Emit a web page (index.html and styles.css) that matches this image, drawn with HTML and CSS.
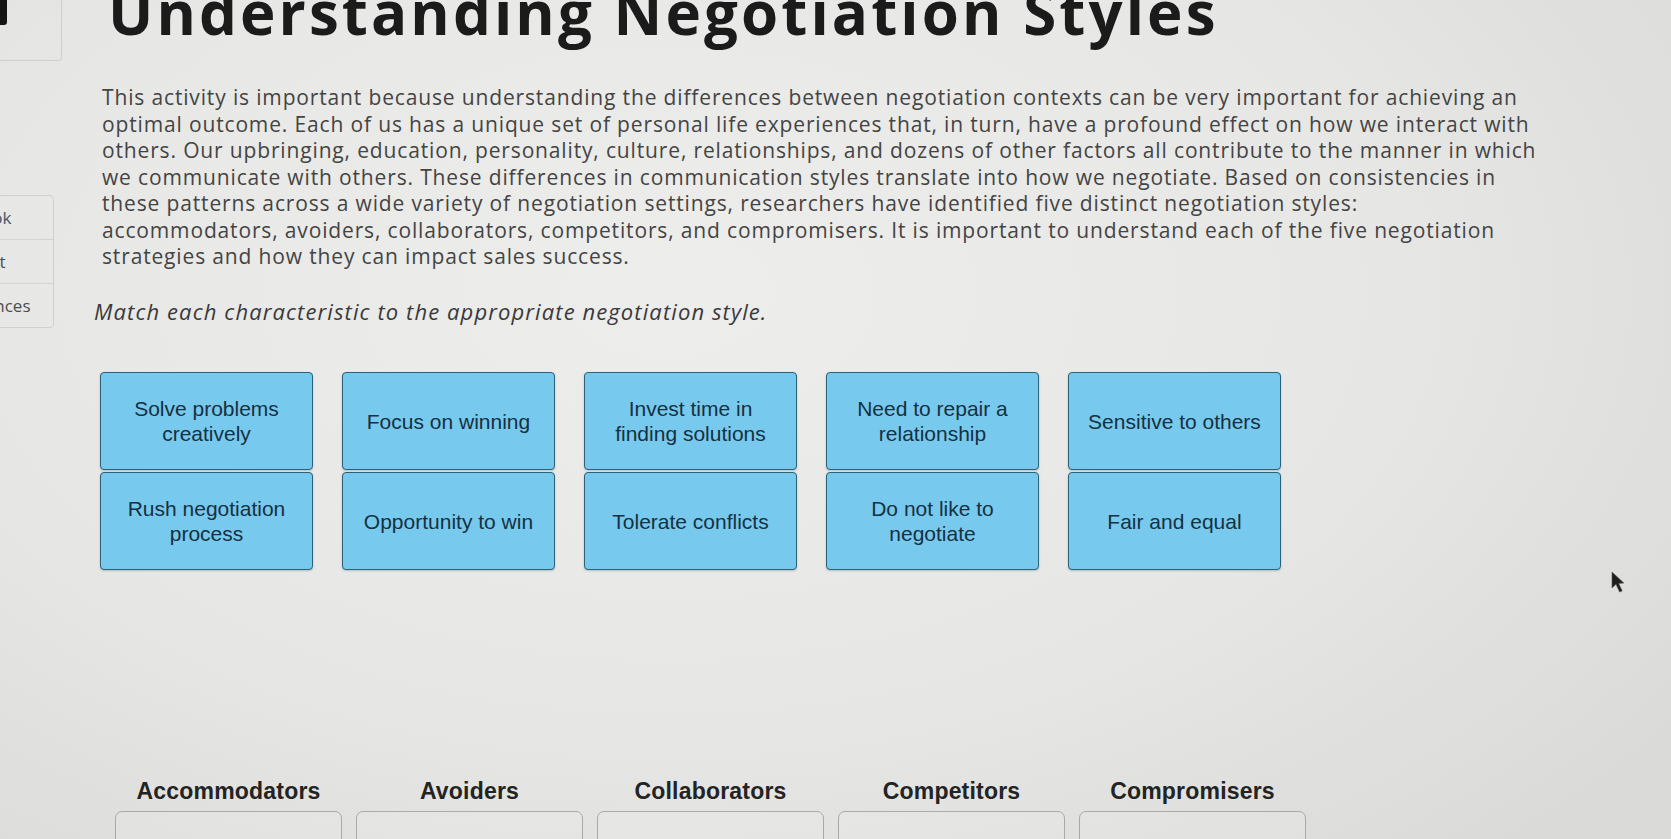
FILE: index.html
```html
<!DOCTYPE html>
<html lang="en">
<head>
<meta charset="utf-8">
<title>Understanding Negotiation Styles</title>
<link rel="stylesheet" href="styles.css">
</head>
<body>
<div class="screen">
  <aside class="sidebar">
    <div class="side-top"><span class="side-mark"></span></div>
    <nav class="side-nav">
      <a class="side-link side-link--active">eBook</a>
      <a class="side-link">Print</a>
      <a class="side-link">References</a>
    </nav>
  </aside>

  <main class="activity">
    <h1 class="activity-title">Understanding Negotiation Styles</h1>
    <p class="intro">This activity is important because understanding the differences between negotiation contexts can be very important for achieving an<br>optimal outcome. Each of us has a unique set of personal life experiences that, in turn, have a profound effect on how we interact with<br>others. Our upbringing, education, personality, culture, relationships, and dozens of other factors all contribute to the manner in which<br>we communicate with others. These differences in communication styles translate into how we negotiate. Based on consistencies in<br>these patterns across a wide variety of negotiation settings, researchers have identified five distinct negotiation styles:<br>accommodators, avoiders, collaborators, competitors, and compromisers. It is important to understand each of the five negotiation<br>strategies and how they can impact sales success.</p>
    <p class="prompt">Match each characteristic to the appropriate negotiation style.</p>

    <div class="cards">
      <div class="card">Solve problems creatively</div>
      <div class="card">Focus on winning</div>
      <div class="card">Invest time in finding solutions</div>
      <div class="card">Need to repair a relationship</div>
      <div class="card">Sensitive to others</div>
      <div class="card">Rush negotiation process</div>
      <div class="card">Opportunity to win</div>
      <div class="card">Tolerate conflicts</div>
      <div class="card">Do not like to negotiate</div>
      <div class="card">Fair and equal</div>
    </div>

    <div class="targets">
      <div class="target"><h2 class="target-label">Accommodators</h2><div class="drop-zone"></div></div>
      <div class="target"><h2 class="target-label">Avoiders</h2><div class="drop-zone"></div></div>
      <div class="target"><h2 class="target-label">Collaborators</h2><div class="drop-zone"></div></div>
      <div class="target"><h2 class="target-label">Competitors</h2><div class="drop-zone"></div></div>
      <div class="target"><h2 class="target-label">Compromisers</h2><div class="drop-zone"></div></div>
    </div>
  </main>

  <svg class="pointer" width="18" height="24" viewBox="0 0 18 24" aria-hidden="true">
    <path d="M1 1 L1 17 L5 13.3 L8.6 21 L11.2 19.9 L7.7 12.4 L12.8 12 Z" fill="#1e1e1e" stroke="#555" stroke-width="0.6"/>
  </svg>
</div>
</body>
</html>
```

FILE: styles.css
```css
html, body {
  margin: 0;
  padding: 0;
}

body {
  width: 1671px;
  height: 839px;
  overflow: hidden;
  font-family: "Open Sans", "Liberation Sans", sans-serif;
  background: radial-gradient(ellipse 75% 90% at 40% 35%, #ededeb 0%, #e7e7e5 55%, #dadad8 100%);
  color: #3d3d3d;
}

.screen {
  position: relative;
  display: flex;
  align-items: flex-start;
  height: 839px;
}

/* left navigation rail, partly scrolled out of view */
.sidebar {
  flex: none;
  width: 140px;
  margin-left: -78px;
  display: flex;
  flex-direction: column;
}

.side-top {
  position: relative;
  height: 60px;
  border-right: 1px solid #cfcfcd;
  border-bottom: 1px solid #cfcfcd;
  border-radius: 0 0 4px 0;
}

.side-mark {
  position: absolute;
  left: 76px;
  top: 0;
  width: 9px;
  height: 25px;
  background: #151515;
  border-radius: 0 0 3px 0;
}

.side-nav {
  margin: 134px 0 0 -3px;
  width: 133px;
  display: flex;
  flex-direction: column;
  border: 1px solid #d0d0ce;
  border-radius: 4px;
}

.side-link {
  height: 43px;
  display: flex;
  align-items: center;
  justify-content: center;
  font-size: 17px;
  color: #4d4d4d;
  border-top: 1px solid #d4d4d2;
}

.side-link--active {
  color: #4a5568;
}

.side-link:first-child {
  border-top: none;
}

.activity {
  flex: none;
  width: 1500px;
  margin-left: 38px;
  display: flex;
  flex-direction: column;
}

.activity-title {
  margin: -24px 0 0 8px;
  font-size: 60px;
  line-height: 72px;
  font-weight: 700;
  color: #1b1b1b;
  letter-spacing: 3.1px;
  white-space: nowrap;
}

.intro {
  margin: 36px 0 0 2px;
  font-size: 21px;
  line-height: 26.5px;
  letter-spacing: 0.85px;
  color: #444;
  white-space: nowrap;
}

.prompt {
  margin: 28px 0 0 -6px;
  font-size: 22px;
  line-height: 26.5px;
  letter-spacing: 1.1px;
  font-style: italic;
  color: #3a3a3a;
}

.cards {
  margin-top: 48px;
  display: grid;
  grid-template-columns: repeat(5, 213px);
  grid-auto-rows: 98px;
  column-gap: 29px;
  row-gap: 2px;
}

.card {
  display: flex;
  align-items: center;
  justify-content: center;
  padding: 0 10px;
  text-align: center;
  background: #78c9ee;
  border: 1.5px solid #2d6177;
  border-radius: 4px;
  font-family: "Liberation Sans", Arial, sans-serif;
  font-size: 21px;
  line-height: 25px;
  color: #16313f;
  box-shadow: 0 1px 2px rgba(40, 70, 90, 0.25);
}

.targets {
  margin: 208px 0 0 15px;
  display: grid;
  grid-template-columns: repeat(5, 227px);
  column-gap: 14px;
}

.target {
  display: flex;
  flex-direction: column;
  align-items: center;
}

.target-label {
  margin: 0;
  font-family: "Liberation Sans", Arial, sans-serif;
  font-size: 23px;
  line-height: 26px;
  font-weight: bold;
  color: #232323;
  letter-spacing: 0.2px;
}

.drop-zone {
  margin-top: 7px;
  align-self: stretch;
  height: 90px;
  border: 1.5px solid #a9a9a7;
  border-radius: 7px;
  background: rgba(255, 255, 255, 0.12);
}

.pointer {
  position: absolute;
  left: 1611px;
  top: 571px;
}
```
